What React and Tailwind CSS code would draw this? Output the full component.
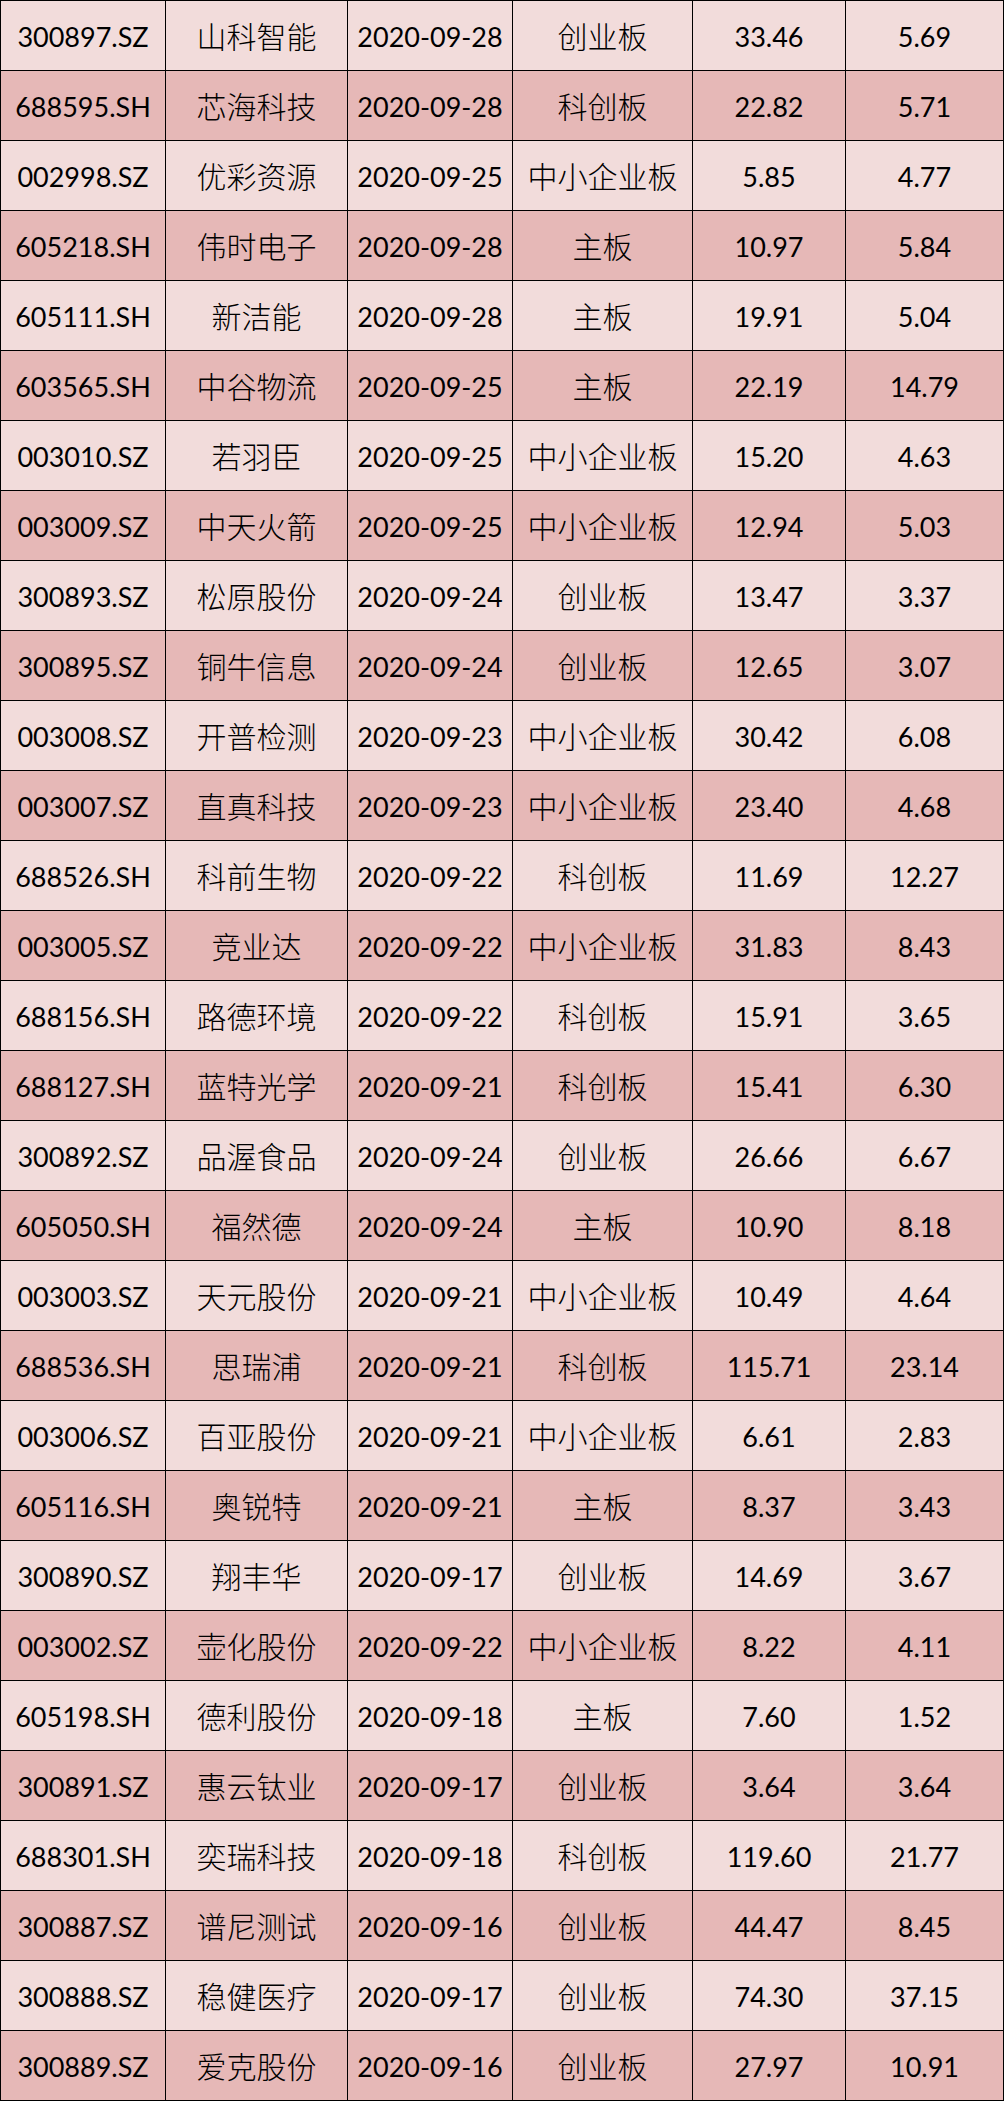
import React from "react";

const rows = [
  ["300897.SZ", "山科智能", "2020-09-28", "创业板", "33.46", "5.69"],
  ["688595.SH", "芯海科技", "2020-09-28", "科创板", "22.82", "5.71"],
  ["002998.SZ", "优彩资源", "2020-09-25", "中小企业板", "5.85", "4.77"],
  ["605218.SH", "伟时电子", "2020-09-28", "主板", "10.97", "5.84"],
  ["605111.SH", "新洁能", "2020-09-28", "主板", "19.91", "5.04"],
  ["603565.SH", "中谷物流", "2020-09-25", "主板", "22.19", "14.79"],
  ["003010.SZ", "若羽臣", "2020-09-25", "中小企业板", "15.20", "4.63"],
  ["003009.SZ", "中天火箭", "2020-09-25", "中小企业板", "12.94", "5.03"],
  ["300893.SZ", "松原股份", "2020-09-24", "创业板", "13.47", "3.37"],
  ["300895.SZ", "铜牛信息", "2020-09-24", "创业板", "12.65", "3.07"],
  ["003008.SZ", "开普检测", "2020-09-23", "中小企业板", "30.42", "6.08"],
  ["003007.SZ", "直真科技", "2020-09-23", "中小企业板", "23.40", "4.68"],
  ["688526.SH", "科前生物", "2020-09-22", "科创板", "11.69", "12.27"],
  ["003005.SZ", "竞业达", "2020-09-22", "中小企业板", "31.83", "8.43"],
  ["688156.SH", "路德环境", "2020-09-22", "科创板", "15.91", "3.65"],
  ["688127.SH", "蓝特光学", "2020-09-21", "科创板", "15.41", "6.30"],
  ["300892.SZ", "品渥食品", "2020-09-24", "创业板", "26.66", "6.67"],
  ["605050.SH", "福然德", "2020-09-24", "主板", "10.90", "8.18"],
  ["003003.SZ", "天元股份", "2020-09-21", "中小企业板", "10.49", "4.64"],
  ["688536.SH", "思瑞浦", "2020-09-21", "科创板", "115.71", "23.14"],
  ["003006.SZ", "百亚股份", "2020-09-21", "中小企业板", "6.61", "2.83"],
  ["605116.SH", "奥锐特", "2020-09-21", "主板", "8.37", "3.43"],
  ["300890.SZ", "翔丰华", "2020-09-17", "创业板", "14.69", "3.67"],
  ["003002.SZ", "壶化股份", "2020-09-22", "中小企业板", "8.22", "4.11"],
  ["605198.SH", "德利股份", "2020-09-18", "主板", "7.60", "1.52"],
  ["300891.SZ", "惠云钛业", "2020-09-17", "创业板", "3.64", "3.64"],
  ["688301.SH", "奕瑞科技", "2020-09-18", "科创板", "119.60", "21.77"],
  ["300887.SZ", "谱尼测试", "2020-09-16", "创业板", "44.47", "8.45"],
  ["300888.SZ", "稳健医疗", "2020-09-17", "创业板", "74.30", "37.15"],
  ["300889.SZ", "爱克股份", "2020-09-16", "创业板", "27.97", "10.91"],
];

const cjk = [false, true, false, true, false, false];

export default function App() {
  return (
    <div
      className="w-[1004px] border-t border-black"
      style={{}}
    >
      {rows.map((r, i) => (
        <div
          key={i}
          className={
            "grid grid-cols-[166px_182px_165px_180px_153px_158px] h-[70px] " +
            (i % 2 === 0 ? "bg-[#f2dcdb]" : "bg-[#e6b8b7]")
          }
        >
          {r.map((c, j) => (
            <div
              key={j}
              className={
                "flex items-center justify-center border-b border-r border-black text-black leading-none font-['Lato','Noto_Sans_CJK_SC',sans-serif] " +
                (j === 0 ? "border-l " : "") +
                (cjk[j] ? "text-[30px] font-light pt-[1px]" : "text-[27px] pt-[2px]")
              }
            >
              {c}
            </div>
          ))}
        </div>
      ))}
    </div>
  );
}
